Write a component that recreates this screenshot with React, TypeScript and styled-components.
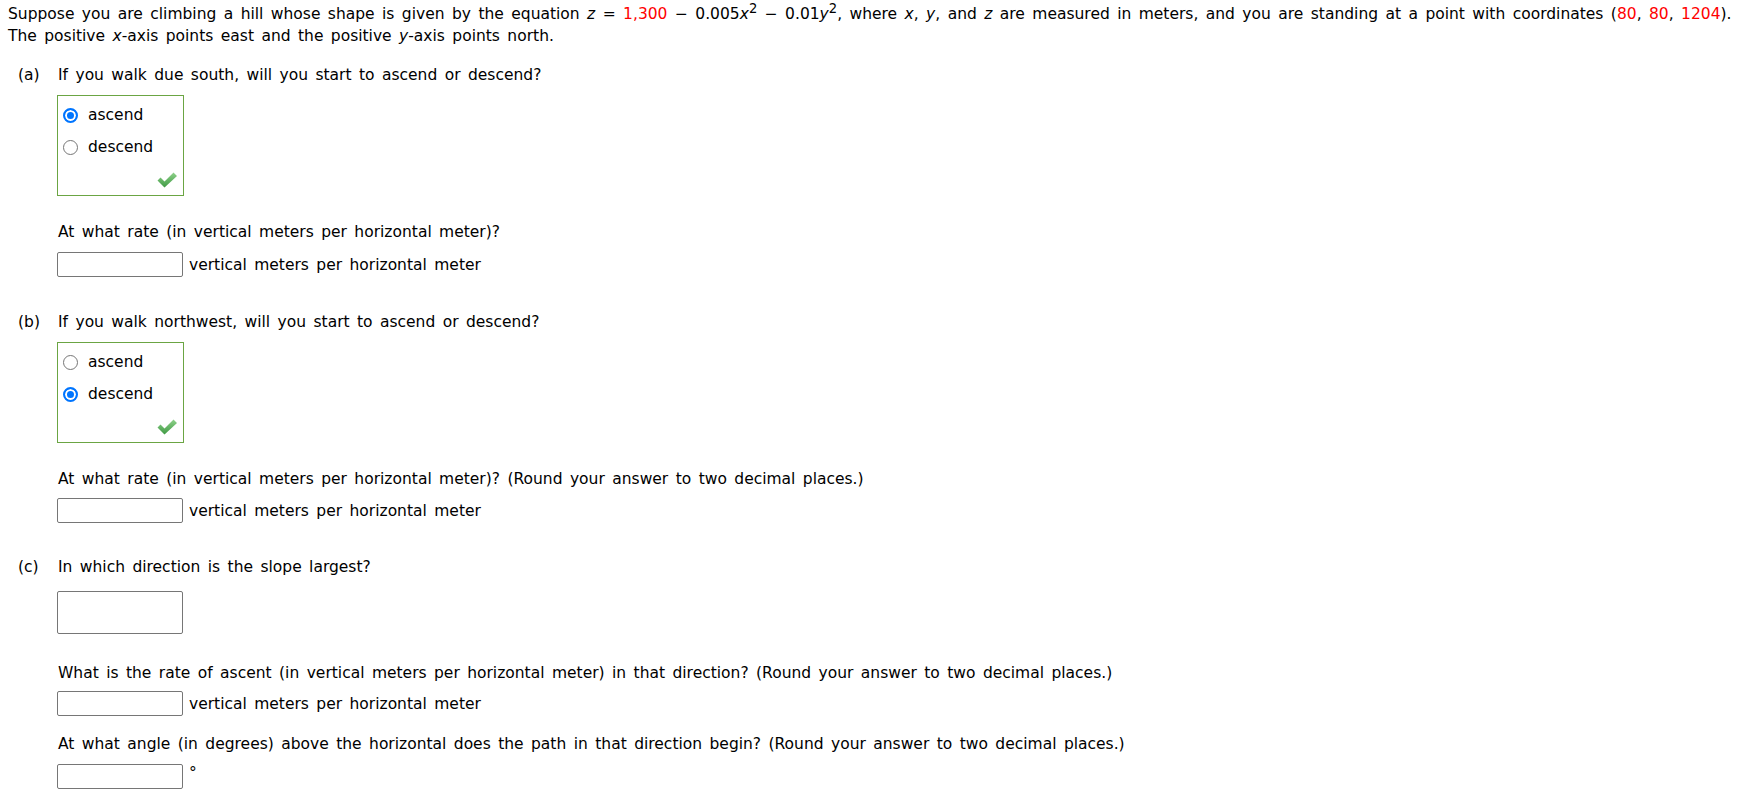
import React from 'react';
import styled, { createGlobalStyle } from 'styled-components';

/* -------------------------------------------------------------------------- */
/*                                   Styles                                   */
/* -------------------------------------------------------------------------- */

const GlobalStyle = createGlobalStyle`
  html, body {
    margin: 0;
    background: #fff;
  }
  body {
    padding: 3px 8px 0;
    font-family: 'DejaVu Sans', Verdana, sans-serif;
    font-size: 15.5px;
    word-spacing: 2.5px;
    line-height: 22px;
    color: #000;
  }
`;

const Intro = styled.p`
  margin: 0;
  white-space: nowrap;
`;

const Red = styled.span`
  color: #f00;
`;

const Var = styled.i`
  font-style: italic;
`;

const Sup = styled.sup`
  font-size: 0.85em;
  line-height: 0;
  vertical-align: 0.45em;
`;

const Part = styled.div<{ $gap: number }>`
  display: flex;
  margin-top: ${(p) => p.$gap}px;
  padding-left: 10px;
`;

const PartLabel = styled.div`
  width: 40px;
  flex-shrink: 0;
`;

const PartBody = styled.div`
  display: flex;
  flex-direction: column;
  align-items: flex-start;
`;

const Line = styled.div<{ $gap?: number }>`
  margin-top: ${(p) => p.$gap ?? 0}px;
`;

const ChoiceBox = styled.div<{ $gap: number }>`
  position: relative;
  box-sizing: border-box;
  width: 127px;
  height: 101px;
  margin-top: ${(p) => p.$gap}px;
  margin-left: -1px;
  border: 1px solid #6ba543;
  padding: 8px 0 0 5px;
  display: flex;
  flex-direction: column;
  gap: 10px;
`;

const Choice = styled.label`
  display: flex;
  align-items: center;
  gap: 10px;
  height: 22px;
`;

const Radio = styled.input`
  appearance: none;
  margin: 0;
  width: 15px;
  height: 15px;
  box-sizing: border-box;
  border: 1px solid #767676;
  border-radius: 50%;
  background: #fff;

  &:checked {
    border: 2px solid #0075ff;
    background: #0075ff;
    box-shadow: inset 0 0 0 2px #fff;
  }
`;

const Check = styled.svg`
  position: absolute;
  right: 5px;
  bottom: 7px;
`;

const AnswerRow = styled.div<{ $gap: number }>`
  display: flex;
  align-items: center;
  gap: 6px;
  margin-top: ${(p) => p.$gap}px;
  margin-left: -1px;
`;

const TextBox = styled.input<{ $tall?: boolean }>`
  box-sizing: border-box;
  width: 126px;
  height: ${(p) => (p.$tall ? 43 : 25)}px;
  margin: 0;
  border: 1px solid #767676;
  border-radius: 2px;
  padding: 0 4px;
  font: inherit;
`;

const Degree = styled.span`
  align-self: flex-start;
  margin-top: -2px;
`;

/* -------------------------------------------------------------------------- */
/*                                 Components                                 */
/* -------------------------------------------------------------------------- */

const CheckMark = () => (
  <Check width="21" height="16" viewBox="0 0 21 16">
    <defs>
      <linearGradient id="chk" x1="0" y1="0" x2="0" y2="1">
        <stop offset="0" stopColor="#8fd18a" />
        <stop offset="1" stopColor="#3f9a44" />
      </linearGradient>
    </defs>
    <polygon
      points="0.5,8.5 3.5,5.5 7.5,9.5 16.5,0.5 20,4 7.5,15.5"
      fill="url(#chk)"
    />
  </Check>
);

const Choices = ({ name, picked, gap }: { name: string; picked: string; gap: number }) => (
  <ChoiceBox $gap={gap}>
    {['ascend', 'descend'].map((opt) => (
      <Choice key={opt}>
        <Radio type="radio" name={name} defaultChecked={opt === picked} />
        {opt}
      </Choice>
    ))}
    <CheckMark />
  </ChoiceBox>
);

const App = () => (
  <>
    <GlobalStyle />
    <Intro>
      Suppose you are climbing a hill whose shape is given by the equation <Var>z</Var> ={' '}
      <Red>1,300</Red> − 0.005<Var>x</Var>
      <Sup>2</Sup> − 0.01<Var>y</Var>
      <Sup>2</Sup>, where <Var>x</Var>, <Var>y</Var>, and <Var>z</Var> are measured in meters, and you
      are standing at a point with coordinates (<Red>80</Red>, <Red>80</Red>, <Red>1204</Red>).
      <br />
      The positive <Var>x</Var>-axis points east and the positive <Var>y</Var>-axis points north.
    </Intro>

    {/* ---------------------------------- (a) --------------------------------- */}
    <Part $gap={17}>
      <PartLabel>(a)</PartLabel>
      <PartBody>
        <Line>If you walk due south, will you start to ascend or descend?</Line>
        <Choices name="a" picked="ascend" gap={9} />
        <Line $gap={25}>At what rate (in vertical meters per horizontal meter)?</Line>
        <AnswerRow $gap={9}>
          <TextBox type="text" />
          <span>vertical meters per horizontal meter</span>
        </AnswerRow>
      </PartBody>
    </Part>

    {/* ---------------------------------- (b) --------------------------------- */}
    <Part $gap={34}>
      <PartLabel>(b)</PartLabel>
      <PartBody>
        <Line>If you walk northwest, will you start to ascend or descend?</Line>
        <Choices name="b" picked="descend" gap={9} />
        <Line $gap={25}>
          At what rate (in vertical meters per horizontal meter)? (Round your answer to two decimal
          places.)
        </Line>
        <AnswerRow $gap={8}>
          <TextBox type="text" />
          <span>vertical meters per horizontal meter</span>
        </AnswerRow>
      </PartBody>
    </Part>

    {/* ---------------------------------- (c) --------------------------------- */}
    <Part $gap={33}>
      <PartLabel>(c)</PartLabel>
      <PartBody>
        <Line>In which direction is the slope largest?</Line>
        <AnswerRow $gap={13}>
          <TextBox type="text" $tall />
        </AnswerRow>
        <Line $gap={28}>
          What is the rate of ascent (in vertical meters per horizontal meter) in that direction?
          (Round your answer to two decimal places.)
        </Line>
        <AnswerRow $gap={7}>
          <TextBox type="text" />
          <span>vertical meters per horizontal meter</span>
        </AnswerRow>
        <Line $gap={17}>
          At what angle (in degrees) above the horizontal does the path in that direction begin?
          (Round your answer to two decimal places.)
        </Line>
        <AnswerRow $gap={9}>
          <TextBox type="text" />
          <Degree>°</Degree>
        </AnswerRow>
      </PartBody>
    </Part>
  </>
);

export default App;
